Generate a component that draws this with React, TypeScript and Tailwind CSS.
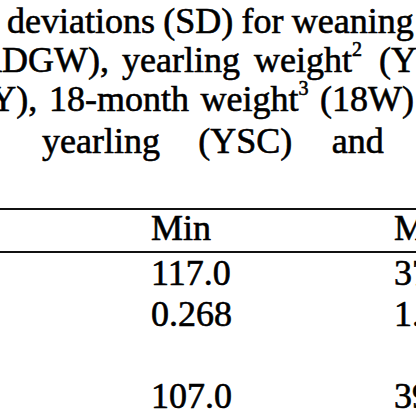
const rows = [
  { min: "117.0", max: "371.0" },
  { min: "0.268", max: "1.542" },
  { min: "", max: "" },
  { min: "107.0", max: "395.0" },
];

function Sup({ n }: { n: string }) {
  return <span className="relative -top-[16px] text-[20px] leading-[12px]">{n}</span>;
}

export default function App() {
  return (
    <div className="h-[416px] w-[416px] overflow-hidden bg-white">
      <div className="w-[416px] pt-[1.5px] font-['Liberation_Serif','Times_New_Roman',serif] text-[36px] leading-[39px] text-black [-webkit-text-stroke:0.6px_#000]">
        {/* caption, justified lines cut by the crop */}
        <div className="flex h-[39px] whitespace-nowrap">
          <span className="ml-[7px] shrink-0">deviations</span>
          <span className="ml-[8.3px] shrink-0">(SD)</span>
          <span className="ml-[8.3px] shrink-0">for</span>
          <span className="ml-[8.3px] shrink-0">weaning</span>
        </div>
        <div className="flex h-[39px] whitespace-nowrap">
          <span className="-ml-[36px] shrink-0">(ADGW),</span>
          <span className="ml-[13px] shrink-0">yearling</span>
          <span className="ml-[14px] shrink-0">
            weight<Sup n="2" />
          </span>
          <span className="ml-[17px] shrink-0">(YW),</span>
        </div>
        <div className="flex h-[39px] whitespace-nowrap">
          <span className="-ml-[73.7px] shrink-0">(ADY),</span>
          <span className="ml-[11.6px] shrink-0">18-month</span>
          <span className="ml-[11.6px] shrink-0">
            weight<Sup n="3" />
          </span>
          <span className="ml-[11.6px] shrink-0">(18W)</span>
          <span className="ml-[11.6px] shrink-0">and</span>
        </div>
        <div className="mt-[3px] flex h-[39px] whitespace-nowrap">
          <span className="ml-[42px] shrink-0">yearling</span>
          <span className="ml-[38.3px] shrink-0">(YSC)</span>
          <span className="ml-[39.4px] shrink-0">and</span>
        </div>

        {/* table */}
        <div className="mt-[47px] h-[2px] w-full bg-[#111]" />
        <div className="flex h-[37px] whitespace-nowrap leading-[37px]">
          <span className="w-[151px] shrink-0" />
          <span className="w-[243px] shrink-0">Min</span>
          <span className="shrink-0">Max</span>
        </div>
        <div className="mt-[4px] h-[2px] w-full bg-[#111]" />
        {rows.map((r, i) => (
          <div key={i} className="flex h-[41px] whitespace-nowrap leading-[41px]">
            <span className="w-[151px] shrink-0" />
            <span className="w-[243px] shrink-0">{r.min}</span>
            <span className="shrink-0">{r.max}</span>
          </div>
        ))}
      </div>
    </div>
  );
}
